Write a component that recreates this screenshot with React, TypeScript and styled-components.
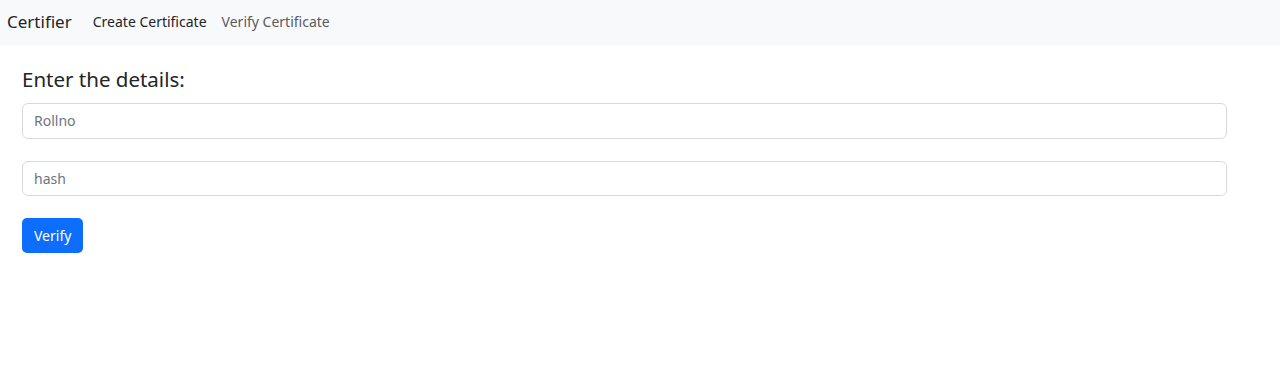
import React from 'react';
import styled, { createGlobalStyle } from 'styled-components';

const GlobalStyle = createGlobalStyle`
  body {
    margin: 0;
    background: #fff;
    font-family: 'Noto Sans', 'Open Sans', sans-serif;
    color: #212529;
  }
  * { box-sizing: border-box; }
`;

const NavBar = styled.nav`
  display: flex;
  align-items: center;
  height: 46px;
  padding: 0 7px 3px;
  background-color: #f8f9fa;
`;

const Brand = styled.a`
  font-size: 17px;
  color: #212529;
  margin-right: 21px;
  text-decoration: none;
`;

const NavLink = styled.a<{ $active?: boolean }>`
  font-size: 14px;
  margin-right: 15px;
  color: ${({ $active }) => ($active ? '#212529' : '#595c5f')};
  text-decoration: none;
`;

const Main = styled.main`
  padding: 20px 53px 0 22px;
`;

const Title = styled.h4`
  margin: 0 0 11px;
  font-size: 20.5px;
  font-weight: 400;
  line-height: 26px;
`;

const Field = styled.input`
  display: block;
  width: 100%;
  height: 35.5px;
  margin-bottom: 22px;
  padding: 0 11px;
  font-family: inherit;
  font-size: 14px;
  color: #212529;
  border: 1px solid #d7dadd;
  border-radius: 6px;
  outline: none;

  &::placeholder {
    color: #6c757d;
  }
`;

const Button = styled.button`
  height: 35px;
  padding: 0 12px;
  font-family: inherit;
  font-size: 14px;
  color: #fff;
  background-color: #0d6efd;
  border: none;
  border-radius: 5px;
`;

const App = () => {
  return (
    <>
      <GlobalStyle />
      <NavBar>
        <Brand>Certifier</Brand>
        <NavLink $active>Create Certificate</NavLink>
        <NavLink>Verify Certificate</NavLink>
      </NavBar>
      <Main>
        <Title>Enter the details:</Title>
        <Field placeholder="Rollno" />
        <Field placeholder="hash" />
        <Button>Verify</Button>
      </Main>
    </>
  );
};

export default App;
